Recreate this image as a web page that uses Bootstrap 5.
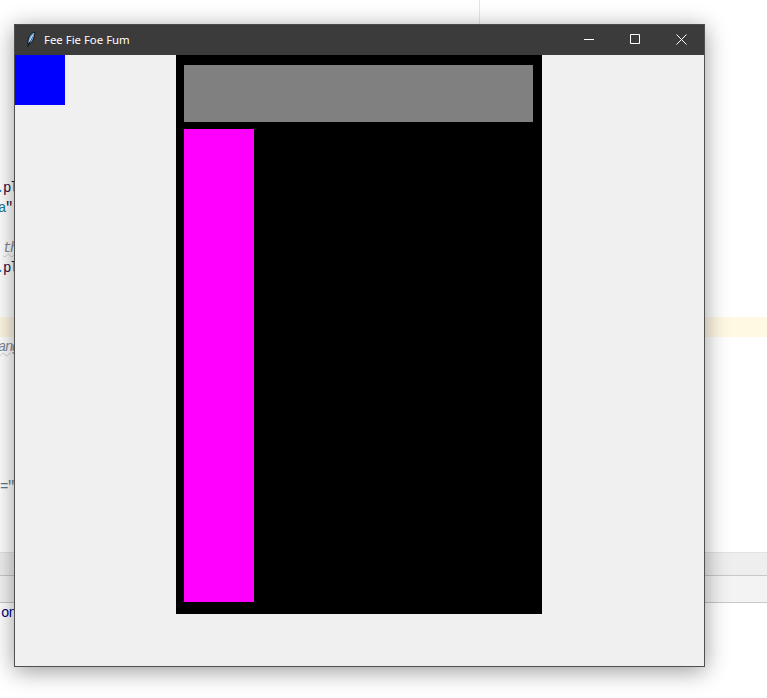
<!DOCTYPE html>
<html lang="en">
<head>
    <meta charset="UTF-8">
    <meta name="viewport" content="width=device-width, initial-scale=1.0">
    <title>Fee Fie Foe Fum</title>
    <link href="https://cdn.jsdelivr.net/npm/bootstrap@5.3.0/dist/css/bootstrap.min.css" rel="stylesheet">
    <style>
        html, body { height: 698px; overflow: hidden; }
        body { background: #fff; position: relative; }

        /* editor that sits behind the window */
        .editor-bg { padding-top: 178px; font-family: "Liberation Mono", monospace; font-size: 14px; }
        .code-line { height: 20px; line-height: 20px; white-space: pre; color: #2c1040; letter-spacing: -1.5px; }
        .code-line.faint { color: #7f8a99; font-style: italic; text-decoration: underline wavy #cfcfcf 1px; }
        .code-line.hl { background: #fff8e3; margin-top: -1px; }
        .code-line.str { color: #5a7a8a; }
        .code-line.pull { margin-left: -4px; }
        .code-line.pull-a { margin-left: -2px; }
        .dot-blue { color: #2a6fd0; }
        .word-teal { color: #1a7a9a; }
        .th-line { padding-left: 3px; }
        .bar-top { height: 24px; margin-top: 55px; background: #eeeeee; border-top: 1px solid #e2e2e2; border-bottom: 1px solid #c8c8c8; }
        .bar-low { height: 27px; background: #f3f3f3; border-bottom: 1px solid #c8c8c8; }
        .out-line { height: 20px; line-height: 20px; padding-left: 1px; color: #000080; letter-spacing: -1px; }
        .split-line { position: absolute; left: 479px; top: 0; width: 1px; height: 24px; background: #e6e6e6; }

        /* the window */
        .app-window {
            position: absolute; left: 14px; top: 24px; width: 691px; height: 643px;
            border: 1px solid #505050; border-top-color: #4a4a4a; background: #f0f0f0;
            box-shadow: 0 4px 22px rgba(0, 0, 0, .4);
        }
        .title-bar { height: 30px; background: #3b3b3b; color: #fff; font-family: "Noto Sans", sans-serif; font-size: 11.4px; }
        .title-icon { margin-left: 10px; margin-right: 7px; margin-bottom: 1px; }
        .win-btn { width: 46px; height: 30px; padding-bottom: 2px; }
        .client { height: 611px; }
        .blue-box { width: 50px; height: 50px; background: #0000ff; }
        .black-panel { width: 366px; height: 559px; margin-left: 111px; padding: 10px 9px 12px 8px; background: #000; }
        .grey-box { height: 57px; margin-bottom: 7px; background: #808080; }
        .pink-box { width: 70px; height: 473px; background: #ff00ff; }
    </style>
</head>
<body>
    <div class="split-line"></div>
    <div class="editor-bg">
        <div class="code-line pull"><span class="dot-blue">.</span>pl</div>
        <div class="code-line pull-a"><span class="word-teal">a</span>")</div>
        <div class="code-line"></div>
        <div class="code-line faint th-line">th</div>
        <div class="code-line pull"><span class="dot-blue">.</span>pl</div>
        <div class="code-line"></div>
        <div class="code-line"></div>
        <div class="code-line hl"></div>
        <div class="code-line faint pull-a">ang</div>
        <div class="code-line"></div>
        <div class="code-line"></div>
        <div class="code-line"></div>
        <div class="code-line"></div>
        <div class="code-line"></div>
        <div class="code-line"></div>
        <div class="code-line str">="}</div>
        <div class="bar-top"></div>
        <div class="bar-low"></div>
        <div class="out-line">on</div>
    </div>

    <div class="app-window">
        <div class="title-bar d-flex align-items-center">
            <svg class="title-icon" width="12" height="17" viewBox="0 0 12 17">
                <path d="M10 1C6 2 3.500 5.500 3 10L2.500 13L5 12.500C8 11 9.500 6 10 1Z" fill="#6fa8dc" stroke="#10131a" stroke-width="1"/>
                <path d="M8 4.500L2.500 16" stroke="#10131a" stroke-width="1" fill="none"/>
                <path d="M8 4L4.500 10.500" stroke="#dcecff" stroke-width="1" fill="none"/>
            </svg>
            <span class="flex-grow-1">Fee Fie Foe Fum</span>
            <div class="win-btn d-flex align-items-center justify-content-center">
                <svg width="10" height="10" viewBox="0 0 10 10"><path d="M0 5.500H10" stroke="#fff"/></svg>
            </div>
            <div class="win-btn d-flex align-items-center justify-content-center">
                <svg width="10" height="10" viewBox="0 0 10 10"><path d="M.5 .5H9.500V9.500H.5Z" stroke="#fff" fill="none"/></svg>
            </div>
            <div class="win-btn d-flex align-items-center justify-content-center">
                <svg width="11" height="11" viewBox="0 0 11 11"><path d="M.5 .5L10.500 10.500M10.500 .5L.5 10.500" stroke="#fff"/></svg>
            </div>
        </div>
        <div class="client d-flex align-items-start">
            <div class="blue-box"></div>
            <div class="black-panel">
                <div class="grey-box"></div>
                <div class="pink-box"></div>
            </div>
        </div>
    </div>

    <script src="https://cdn.jsdelivr.net/npm/bootstrap@5.3.0/dist/js/bootstrap.bundle.min.js"></script>
</body>
</html>
